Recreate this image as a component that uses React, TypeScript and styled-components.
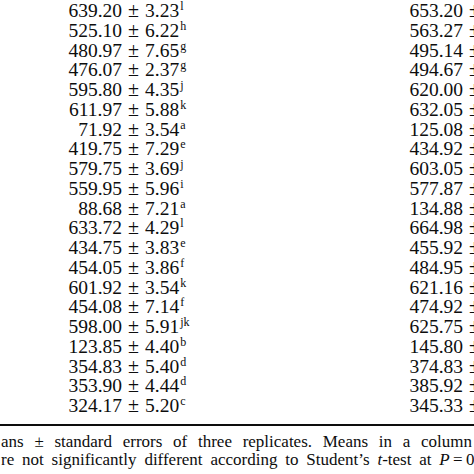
import * as React from "react";
import styled, { createGlobalStyle } from "styled-components";

const GlobalStyle = createGlobalStyle`
  html, body {
    margin: 0;
    padding: 0;
    background: #ffffff;
    overflow: hidden;
  }
`;

const Page = styled.div`
  width: 474px;
  height: 474px;
  overflow: hidden;
  background: #ffffff;
  color: #0d0d0d;
  font-family: "Liberation Serif", "Times New Roman", serif;
  font-size: 19.5px;
`;

const Table = styled.div`
  padding-top: 1px;
`;

const Row = styled.div`
  display: grid;
  grid-template-columns: 122px 218px 123px 40px;
  height: 19.75px;
  line-height: 19.75px;
  white-space: nowrap;
`;

const Mean = styled.span`
  text-align: right;
`;

const Error = styled.span`
  display: block;
`;

const PlusMinus = styled.span`
  display: inline-block;
  width: 13px;
  margin: 0 5px;
  text-align: center;
  font-size: 20px;
`;

const Letter = styled.sup`
  font-size: 12px;
  line-height: 0;
  vertical-align: 7px;
  margin-left: 1px;
`;

const Rule = styled.div`
  margin-top: 8px;
  height: 2px;
  background: #0d0d0d;
`;

const Note = styled.div`
  margin-top: 7px;
  font-size: 17px;
  line-height: 18px;
`;

const NoteLine = styled.div<{ $width: number }>`
  width: ${(p) => p.$width}px;
  margin-left: 1px;
  white-space: nowrap;
  display: flex;
  justify-content: space-between;
`;

const Italic = styled.i`
  font-style: italic;
`;

type Entry = [string, string, string, string];

const rows: Entry[] = [
  ["639.20", "3.23", "l", "653.20"],
  ["525.10", "6.22", "h", "563.27"],
  ["480.97", "7.65", "g", "495.14"],
  ["476.07", "2.37", "g", "494.67"],
  ["595.80", "4.35", "j", "620.00"],
  ["611.97", "5.88", "k", "632.05"],
  ["71.92", "3.54", "a", "125.08"],
  ["419.75", "7.29", "e", "434.92"],
  ["579.75", "3.69", "j", "603.05"],
  ["559.95", "5.96", "i", "577.87"],
  ["88.68", "7.21", "a", "134.88"],
  ["633.72", "4.29", "l", "664.98"],
  ["434.75", "3.83", "e", "455.92"],
  ["454.05", "3.86", "f", "484.95"],
  ["601.92", "3.54", "k", "621.16"],
  ["454.08", "7.14", "f", "474.92"],
  ["598.00", "5.91", "jk", "625.75"],
  ["123.85", "4.40", "b", "145.80"],
  ["354.83", "5.40", "d", "374.83"],
  ["353.90", "4.44", "d", "385.92"],
  ["324.17", "5.20", "c", "345.33"],
];

const line1 = "ans ± standard errors of three replicates. Means in a column".split(" ");
const line2 = "re not significantly different according to Student’s".split(" ");

export default function App() {
  return (
    <Page>
      <GlobalStyle />
      <Table>
        {rows.map(([mean, se, letter, mean2], i) => (
          <Row key={i}>
            <Mean>{mean}</Mean>
            <Error>
              <PlusMinus>±</PlusMinus>
              {se}
              <Letter>{letter}</Letter>
            </Error>
            <Mean>{mean2}</Mean>
            <Error>
              <PlusMinus>±</PlusMinus>
            </Error>
          </Row>
        ))}
      </Table>
      <Rule />
      <Note>
        <NoteLine $width={471}>
          {line1.map((w, i) => (
            <span key={i}>{w}</span>
          ))}
        </NoteLine>
        <NoteLine $width={495}>
          {line2.map((w, i) => (
            <span key={i}>{w}</span>
          ))}
          <span>
            <Italic>t</Italic>-test
          </span>
          <span>at</span>
          <span>
            <Italic>P</Italic>&thinsp;=&thinsp;0.05
          </span>
        </NoteLine>
      </Note>
    </Page>
  );
}
